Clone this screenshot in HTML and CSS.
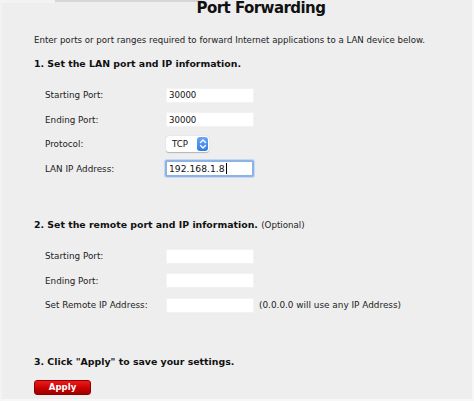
FILE: index.html
```html
<!DOCTYPE html>
<html>
<head>
<meta charset="utf-8">
<link rel="stylesheet" href="styles.css">
</head>
<body>
<div class="page">
  <h1 class="title">Port Forwarding</h1>
  <p class="intro">Enter ports or port ranges required to forward Internet applications to a LAN device below.</p>

  <h2 class="step step-1">1. Set the LAN port and IP information.</h2>
  <div class="rows rows-1">
    <label class="lbl">Starting Port:</label>
    <div class="field"><span class="input">30000</span></div>
    <label class="lbl">Ending Port:</label>
    <div class="field"><span class="input">30000</span></div>
    <label class="lbl">Protocol:</label>
    <div class="field">
      <span class="select">TCP
        <span class="stepper">
          <svg viewBox="0 0 10 14" width="10" height="14"><path d="M2.5 5.5 L5 3 L7.5 5.5 M2.5 8.5 L5 11 L7.5 8.5" fill="none" stroke="#fff" stroke-width="1.4" stroke-linecap="round" stroke-linejoin="round"/></svg>
        </span>
      </span>
    </div>
    <label class="lbl">LAN IP Address:</label>
    <div class="field"><span class="input input-focus">192.168.1.8<span class="caret"></span></span></div>
  </div>

  <h2 class="step step-2">2. Set the remote port and IP information. <span class="opt">(Optional)</span></h2>
  <div class="rows rows-2">
    <label class="lbl">Starting Port:</label>
    <div class="field"><span class="input"></span></div>
    <label class="lbl">Ending Port:</label>
    <div class="field"><span class="input"></span></div>
    <label class="lbl">Set Remote IP Address:</label>
    <div class="field"><span class="input"></span><span class="hint">(0.0.0.0 will use any IP Address)</span></div>
  </div>

  <h2 class="step step-3">3. Click "Apply" to save your settings.</h2>
  <div class="actions"><button class="apply" type="button">Apply</button></div>
</div>
</body>
</html>
```

FILE: styles.css
```css
html, body {
  margin: 0;
  padding: 0;
  background: #eeeeee;
}
body {
  font-family: "DejaVu Sans", Verdana, sans-serif;
  color: #1a1a1a;
  width: 474px;
  height: 401px;
  overflow: hidden;
}
.page {
  box-sizing: border-box;
  height: 401px;
  border-right: 2px solid #f7f7f7;
  border-bottom: 2px solid #f7f7f7;
  border-left: 2px solid #f3f3f3;
  background:
    linear-gradient(#d6d6d6, #d6d6d6) 53px 0 / 147px 2px no-repeat,
    linear-gradient(#f3f3f3, #f3f3f3) 0 0 / 53px 3px no-repeat,
    #eeeeee;
}
.title {
  margin: 0;
  padding-left: 48px;
  text-align: center;
  font-size: 15px;
  letter-spacing: -0.55px;
  line-height: 17px;
  font-weight: bold;
  color: #111;
}
.intro {
  margin: 17px 0 0 32px;
  font-size: 8.65px;
  line-height: 13px;
  color: #222;
}
.step {
  margin: 0 0 0 32px;
  font-size: 9.4px;
  line-height: 14px;
  font-weight: bold;
  color: #111;
}
.step-1 { margin-top: 10px; }
.step-2 { margin-top: 37px; }
.step-3 { margin-top: 37px; }
.opt {
  font-weight: normal;
  font-size: 8.7px;
  color: #222;
}
.rows {
  display: grid;
  grid-template-columns: 121px 1fr;
  grid-auto-rows: 24.5px;
  align-items: center;
  margin-left: 43px;
}
.rows-1 { margin-top: 12px; }
.rows-2 { margin-top: 12px; }
.lbl {
  font-size: 8.8px;
  color: #222;
}
.field {
  display: flex;
  align-items: center;
}
.input {
  box-sizing: border-box;
  display: inline-flex;
  align-items: center;
  width: 88px;
  height: 15px;
  padding-left: 2px;
  background: #ffffff;
  border: 1px solid #f2f2f2;
  font-size: 8.6px;
  color: #111;
}
.input-focus {
  width: 89px;
  height: 17px;
  margin-left: -1px;
  border: 2px solid #8db3e6;
  border-radius: 2px;
  box-shadow: 0 0 0 1px #c5d8f2;
  font-size: 9.2px;
}
.caret {
  display: inline-block;
  width: 1px;
  height: 11px;
  margin-left: 1px;
  background: #000;
}
.select {
  box-sizing: border-box;
  display: inline-flex;
  align-items: center;
  justify-content: space-between;
  width: 43px;
  height: 16px;
  padding-left: 6px;
  padding-right: 1px;
  background: #fff;
  border-radius: 3px;
  box-shadow: 0 0.5px 1px rgba(0,0,0,0.25);
  font-size: 8.6px;
  color: #111;
}
.stepper {
  display: inline-flex;
  align-items: center;
  justify-content: center;
  width: 11px;
  height: 14px;
  border-radius: 3px;
  background: linear-gradient(#6aa8f7, #2f7be6);
}
.stepper svg { display: block; }
.hint {
  margin-left: 5px;
  font-size: 8.9px;
  color: #222;
}
.actions {
  margin: 11px 0 0 32px;
}
.apply {
  display: block;
  width: 57px;
  height: 15px;
  padding: 0;
  border: 1px solid #8e0000;
  border-radius: 3px;
  background: linear-gradient(#ee1a1a, #c40000 60%, #a00000);
  color: #fff;
  font-family: "DejaVu Sans", Verdana, sans-serif;
  font-size: 8.6px;
  font-weight: bold;
  line-height: 13px;
}
```
